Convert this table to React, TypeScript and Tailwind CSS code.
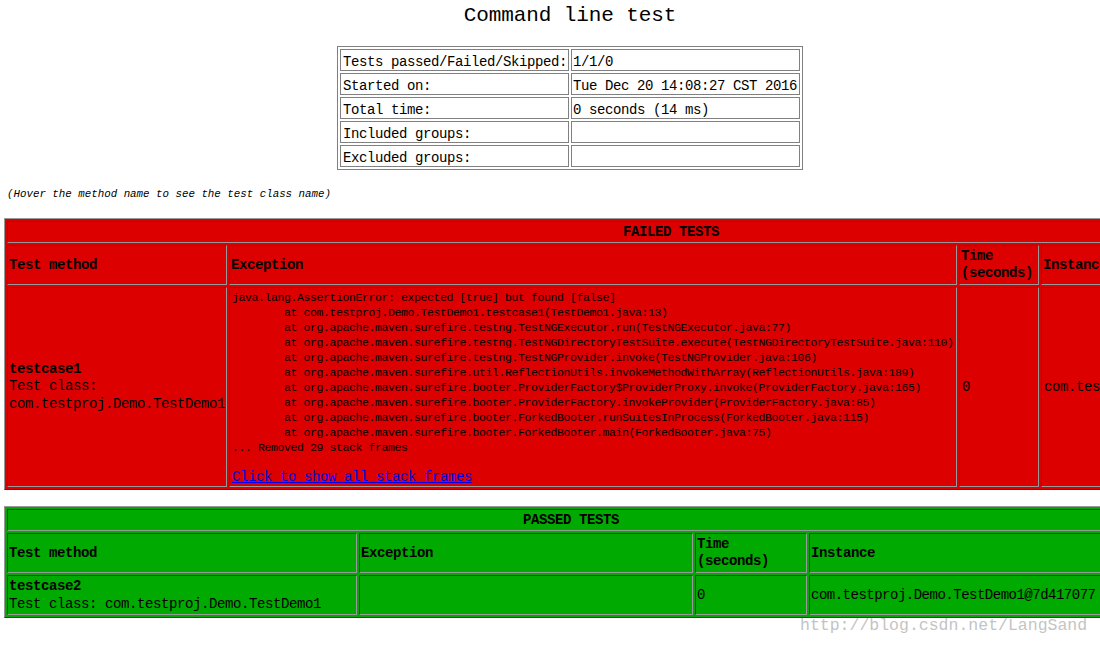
import React from "react"

const stack = [
  "java.lang.AssertionError: expected [true] but found [false]",
  "        at com.testproj.Demo.TestDemo1.testcase1(TestDemo1.java:13)",
  "        at org.apache.maven.surefire.testng.TestNGExecutor.run(TestNGExecutor.java:77)",
  "        at org.apache.maven.surefire.testng.TestNGDirectoryTestSuite.execute(TestNGDirectoryTestSuite.java:110)",
  "        at org.apache.maven.surefire.testng.TestNGProvider.invoke(TestNGProvider.java:106)",
  "        at org.apache.maven.surefire.util.ReflectionUtils.invokeMethodWithArray(ReflectionUtils.java:189)",
  "        at org.apache.maven.surefire.booter.ProviderFactory$ProviderProxy.invoke(ProviderFactory.java:165)",
  "        at org.apache.maven.surefire.booter.ProviderFactory.invokeProvider(ProviderFactory.java:85)",
  "        at org.apache.maven.surefire.booter.ForkedBooter.runSuitesInProcess(ForkedBooter.java:115)",
  "        at org.apache.maven.surefire.booter.ForkedBooter.main(ForkedBooter.java:75)",
  "... Removed 29 stack frames",
  " ",
]

const summary = [
  ["Tests passed/Failed/Skipped:", "1/1/0"],
  ["Started on:", "Tue Dec 20 14:08:27 CST 2016"],
  ["Total time:", "0 seconds (14 ms)"],
  ["Included groups:", ""],
  ["Excluded groups:", ""],
]

// inset cell borders on the coloured tables
const cell =
  "border border-t-[#333] border-l-[#333] border-b-[#999] border-r-[#999] p-[1px]"
const outer =
  "border-separate border-spacing-[2px] border border-t-[#999] border-l-[#999] border-b-[#333] border-r-[#333] table-fixed"

export default function App() {
  return (
    <div className="relative w-[1100px] h-[645px] overflow-hidden bg-white text-black font-['Liberation_Mono',monospace]">
      <div className="w-[1132px] ml-[4px] pt-[4px]">
        {/* Title */}
        <h2 className="text-center text-[21px] tracking-[-0.1px] leading-[24px] font-normal">
          Command line test
        </h2>

        {/* Summary */}
        <table className="mx-auto mt-[18px] border-separate border-spacing-[2px] border border-[#808080] table-fixed w-[466px]">
          <tbody>
            {summary.map(([k, v]) => (
              <tr key={k}>
                <td className="w-[229px] h-[22px] border border-[#808080] px-[2px] pt-[4px] pb-0 text-[14px] tracking-[-0.4px] leading-[16px] whitespace-nowrap">
                  {k}
                </td>
                <td className="w-[229px] h-[22px] border border-[#808080] px-[1px] pt-[4px] pb-0 text-[14px] tracking-[-0.4px] leading-[16px] whitespace-nowrap">
                  {v}
                </td>
              </tr>
            ))}
          </tbody>
        </table>

        <p className="mt-[18px] ml-[3px] text-[10.8px] italic leading-[13px]">
          (Hover the method name to see the test class name)
        </p>

        {/* Failed tests */}
        <table className={`${outer} mt-[17px] w-[1334px] bg-[#dd0000] text-[14px] tracking-[-0.4px]`}>
          <colgroup>
            <col className="w-[220px]" />
            <col className="w-[728px]" />
            <col className="w-[80px]" />
            <col className="w-[294px]" />
          </colgroup>
          <thead>
            <tr>
              <th colSpan={4} className={`${cell} h-[22px] text-center font-bold leading-[18px]`}>
                FAILED TESTS
              </th>
            </tr>
            <tr>
              <th className={`${cell} h-[40px] text-left font-bold`}>Test method</th>
              <th className={`${cell} h-[40px] text-left font-bold`}>Exception</th>
              <th className={`${cell} h-[40px] text-left font-bold leading-[17px] whitespace-nowrap`}>
                Time
                <br />
                (seconds)
              </th>
              <th className={`${cell} h-[40px] text-left font-bold`}>Instance</th>
            </tr>
          </thead>
          <tbody>
            <tr>
              <td className={`${cell} h-[200px] leading-[17.5px] whitespace-nowrap`}>
                <b>testcase1</b>
                <br />
                Test class:
                <br />
                com.testproj.Demo.TestDemo1
              </td>
              <td className={`${cell} h-[200px] px-[2px] align-top`}>
                <div className="text-[11.5px] tracking-[-0.4px] leading-[15px] pt-[1px] whitespace-pre">
                  {stack.join("\n")}
                </div>
                <a href="#" className="block text-[14px] tracking-[-0.4px] leading-[15px] text-[#0000ee] underline">
                  Click to show all stack frames
                </a>
              </td>
              <td className={`${cell} h-[200px] px-[2px]`}>0</td>
              <td className={`${cell} h-[200px] px-[2px] whitespace-nowrap`}>
                com.testproj.Demo.TestDemo1@7d417077
              </td>
            </tr>
          </tbody>
        </table>

        {/* Passed tests */}
        <table className={`${outer} mt-[16px] w-[1134px] bg-[#00aa00] text-[14px] tracking-[-0.4px]`}>
          <colgroup>
            <col className="w-[350px]" />
            <col className="w-[334px]" />
            <col className="w-[112px]" />
            <col className="w-[326px]" />
          </colgroup>
          <thead>
            <tr>
              <th colSpan={4} className={`${cell} h-[22px] text-center font-bold leading-[18px]`}>
                PASSED TESTS
              </th>
            </tr>
            <tr>
              <th className={`${cell} h-[40px] text-left font-bold`}>Test method</th>
              <th className={`${cell} h-[40px] text-left font-bold`}>Exception</th>
              <th className={`${cell} h-[40px] text-left font-bold leading-[17px] whitespace-nowrap`}>
                Time
                <br />
                (seconds)
              </th>
              <th className={`${cell} h-[40px] text-left font-bold`}>Instance</th>
            </tr>
          </thead>
          <tbody>
            <tr>
              <td className={`${cell} h-[40px] leading-[18px] whitespace-nowrap`}>
                <b>testcase2</b>
                <br />
                Test class: com.testproj.Demo.TestDemo1
              </td>
              <td className={`${cell} h-[40px]`}></td>
              <td className={`${cell} h-[40px] px-[1px]`}>0</td>
              <td className={`${cell} h-[40px] px-[1px] whitespace-nowrap tracking-[-0.5px]`}>
                com.testproj.Demo.TestDemo1@7d417077
              </td>
            </tr>
          </tbody>
        </table>
      </div>

      {/* Watermark */}
      <div className="absolute left-[800px] top-[615px] text-[16.5px] leading-[22px] text-[#c4c4c4]">
        http://blog.csdn.net/LangSand
      </div>
    </div>
  )
}
